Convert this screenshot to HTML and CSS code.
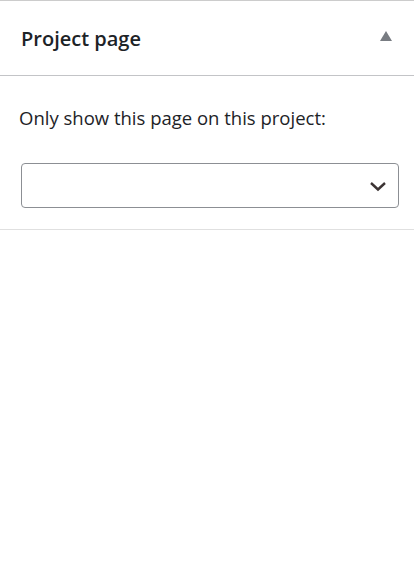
FILE: index.html
```html
<!DOCTYPE html>
<html lang="en">
<head>
<meta charset="utf-8">
<title>Project page</title>
<link rel="stylesheet" href="styles.css">
</head>
<body>
<div class="panel">
  <div class="panel-header">
    <h2 class="panel-title">Project page</h2>
    <span class="toggle" aria-hidden="true"></span>
  </div>
  <div class="panel-body">
    <p class="label">Only show this page on this project:</p>
    <div class="select">
      <svg class="chevron" width="18" height="12" viewBox="0 0 18 12"><path d="M2 3 L9 9.5 L16 3" fill="none" stroke="#3c3434" stroke-width="2.4"/></svg>
    </div>
  </div>
</div>
</body>
</html>
```
FILE: styles.css
```css
html, body {
  margin: 0;
  padding: 0;
  background: #fff;
}
body {
  font-family: "Open Sans", "Noto Sans", sans-serif;
  color: #1e1e1e;
}
.panel {
  border-top: 1px solid #cccccc;
  border-bottom: 1px solid #e0e0e0;
}
.panel-header {
  height: 74px;
  border-bottom: 1px solid #c3c4c7;
  display: flex;
  align-items: center;
  justify-content: space-between;
  padding: 0 22px 0 21px;
}
.panel-title {
  margin: 0;
  font-size: 20px;
  font-weight: 600;
  color: #1d2327;
}
.toggle {
  width: 0;
  height: 0;
  border-left: 6px solid transparent;
  border-right: 6px solid transparent;
  border-bottom: 10px solid #787c82;
  margin-top: -4px;
}
.panel-body {
  padding: 29px 15px 21px 19px;
}
.label {
  margin: 0 0 32px 0;
  font-size: 18.5px;
  line-height: 26px;
  color: #1d2327;
}
.select {
  margin-left: 2px;
  height: 43px;
  border: 1px solid #8c8f94;
  border-radius: 4px;
  display: flex;
  align-items: center;
  justify-content: flex-end;
  padding-right: 11px;
}
.chevron {
  display: block;
}
```
